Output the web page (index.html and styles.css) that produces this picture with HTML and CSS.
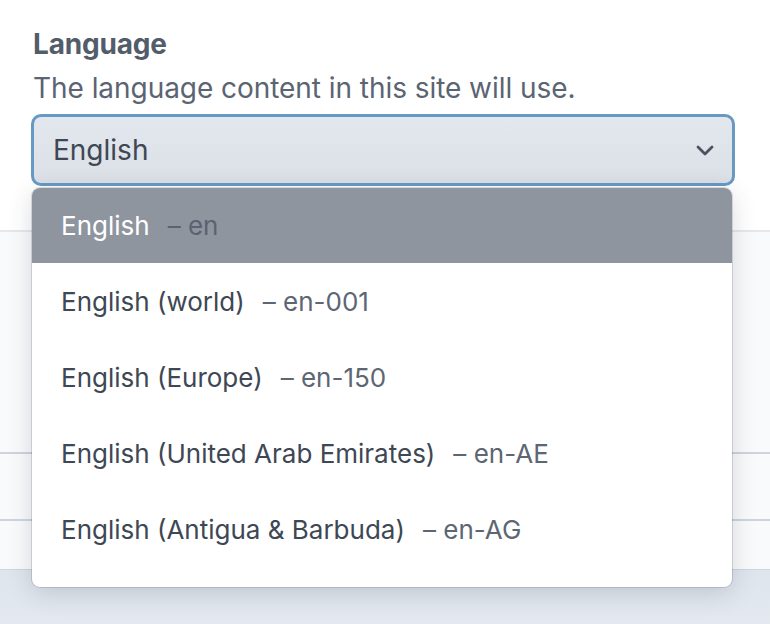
FILE: index.html
```
<!DOCTYPE html>
<html lang="en">
<head>
  <meta charset="UTF-8">
  <title>Language</title>
  <meta name="viewport" content="width=device-width, initial-scale=1.0">
  <link rel="stylesheet" href="styles.css">
</head>
<body>

  <div class="field">
    <label class="field-label" for="lang">Language</label>
    <p class="field-help">The language content in this site will use.</p>

    <div class="select-wrap">
      <div class="select" id="lang">
        <span>English</span>
        <svg class="chevron" width="18" height="11" viewBox="0 0 18 11" aria-hidden="true">
          <path d="M2 2 L9 9 L16 2" fill="none" stroke="#4b5361" stroke-width="2.8" stroke-linecap="round" stroke-linejoin="round"/>
        </svg>
      </div>

      <!-- menu opened over the rest of the form -->
      <ul class="menu">
        <li class="active">English <span class="code">– en</span></li>
        <li>English (world) <span class="code">– en-001</span></li>
        <li>English (Europe) <span class="code">– en-150</span></li>
        <li>English (United Arab Emirates) <span class="code">– en-AE</span></li>
        <li>English (Antigua &amp; Barbuda) <span class="code">– en-AG</span></li>
      </ul>
    </div>
  </div>

  <div class="rows">
    <div class="row first"></div>
    <div class="row tall"></div>
    <div class="row"></div>
    <div class="row last"></div>
  </div>
  <div class="footer"></div>

</body>
</html>
```

FILE: styles.css
```
body {
  margin: 0;
  background: #fff;
  font-family: Inter, "Noto Sans", sans-serif;
  color: #3e4754;
}

.field {
  padding: 28px 35px 0 31px;
}

.field-label {
  display: block;
  padding-left: 2px;
  font-size: 28px;
  font-weight: 700;
  letter-spacing: -0.2px;
  color: #535c69;
  line-height: 32px;
}

.field-help {
  margin: 12px 0 10px;
  padding-left: 2px;
  font-size: 28px;
  line-height: 32px;
  letter-spacing: -0.05px;
  color: #5b6472;
}

.select-wrap {
  position: relative;
}

.select {
  display: flex;
  align-items: center;
  justify-content: space-between;
  height: 66px;
  padding: 0 18px 0 19px;
  border: 3px solid #6899c3;
  border-radius: 10px;
  background: linear-gradient(#e3e7ee, #dbdfe6);
  font-size: 28px;
  color: #3e4754;
}

.menu {
  position: absolute;
  top: 74px;
  left: 1px;
  right: 3px;
  margin: 0;
  padding: 0 0 20px;
  list-style: none;
  background: #fff;
  border-radius: 8px;
  overflow: hidden;
  box-shadow: 0 0 0 1px rgba(0, 0, 0, 0.12), 0 6px 24px rgba(40, 50, 70, 0.18);
  z-index: 2;
}

.menu li {
  height: 76px;
  display: flex;
  align-items: center;
  padding-left: 29px;
  font-size: 26px;
  color: #3e4754;
}

.menu li.active {
  height: 75px;
  background: #8e959f;
  color: #fff;
}

.code {
  margin-left: 18px;
  color: #5d6673;
}

.menu li.active .code {
  color: #5b6370;
}

.row {
  height: 65px;
  border-bottom: 2px solid #cdd4de;
  background: #f9fafb;
}

.row.first {
  height: 44px;
  border-bottom-color: #e6e8eb;
  background: #fff;
}

.row.tall {
  height: 220px;
}

.row.last {
  height: 48px;
  border-bottom: none;
}

.footer {
  height: 60px;
  border-top: 1px solid #cdd5df;
  background: linear-gradient(#dfe5ed, #e4e9f0);
}
```
